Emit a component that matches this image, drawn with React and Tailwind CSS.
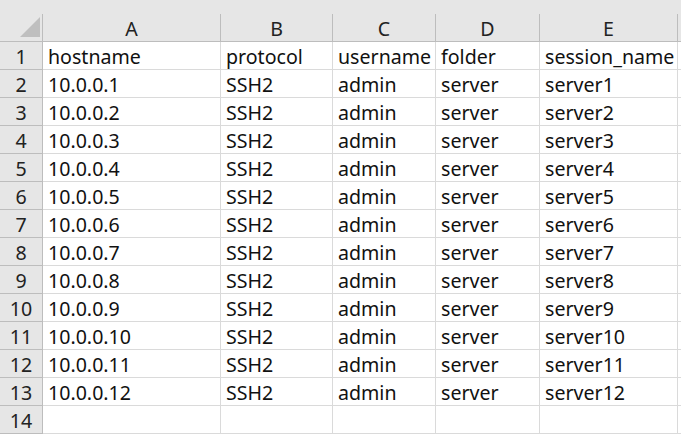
const columns = [
  { key: 'A', width: 'w-[178px]' },
  { key: 'B', width: 'w-[112px]' },
  { key: 'C', width: 'w-[103px]' },
  { key: 'D', width: 'w-[104px]' },
  { key: 'E', width: 'w-[138px]' },
];

const header = ['hostname', 'protocol', 'username', 'folder', 'session_name'];

const rows = [
  header,
  ...Array.from({ length: 12 }, (_, i) => [
    `10.0.0.${i + 1}`,
    'SSH2',
    'admin',
    'server',
    `server${i + 1}`,
  ]),
  ['', '', '', '', ''],
];

function Cell({ width, children }) {
  return (
    <div className={`${width} h-[28px] shrink-0 border-r border-b border-[#dadada] pl-[5px] pt-[2px] flex items-center whitespace-nowrap overflow-hidden`}>
      {children}
    </div>
  );
}

export default function App() {
  return (
    <div
      className="w-[681px] h-[436px] overflow-hidden bg-white text-[#111] text-[19.6px] leading-none"
      style={{ fontFamily: '"Noto Sans", "Noto Sans CJK SC", sans-serif' }}
    >
      <div className="h-[14px] bg-[#e6e6e6]" />

      {/* column letters */}
      <div className="flex bg-[#e6e6e6]">
        <div className="w-[43px] h-[28px] shrink-0 border-r border-b border-[#bdbdbd] relative">
          <svg className="absolute left-[20px] top-[3px]" width="20" height="20" viewBox="0 0 20 20">
            <polygon points="20,0 20,20 0,20" fill="#bfbfbf" />
          </svg>
        </div>
        {columns.map((c) => (
          <div
            key={c.key}
            className={`${c.width} h-[28px] shrink-0 border-r border-b border-[#bdbdbd] pt-[2px] flex items-center justify-center text-[#222]`}
          >
            {c.key}
          </div>
        ))}
        <div className="flex-1 h-[28px] border-b border-[#bdbdbd]" />
      </div>

      {rows.map((row, r) => (
        <div key={r} className="flex">
          <div className="w-[43px] h-[28px] shrink-0 bg-[#e6e6e6] border-r border-b border-[#bdbdbd] pt-[2px] flex items-center justify-center text-[#222]">
            {r + 1}
          </div>
          {row.map((v, i) => (
            <Cell key={i} width={columns[i].width}>
              {v}
            </Cell>
          ))}
          <div className="flex-1 h-[28px] border-b border-[#dadada]" />
        </div>
      ))}
    </div>
  );
}
